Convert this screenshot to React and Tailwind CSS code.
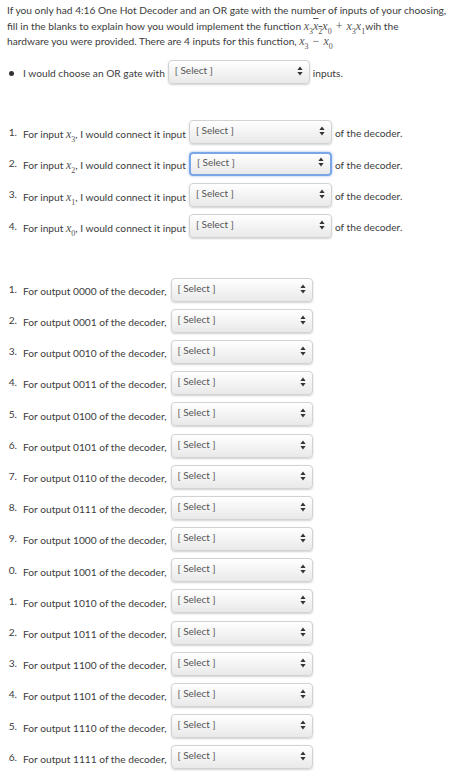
import React from "react";

const font = { fontFamily: "Lato, 'Open Sans', sans-serif" };

// little math helpers, KaTeX-ish look
function X({ sub, bar }) {
  return (
    <span className="italic font-['Liberation_Serif',serif] text-[12px] text-[#555]">
      <span className={bar ? "overline decoration-[#555]" : ""}>
        x<sub className="not-italic text-[8px] align-[-2px]">{sub}</sub>
      </span>
    </span>
  );
}

function Arrows() {
  return (
    <svg width="6" height="10" viewBox="0 0 6 10" className="shrink-0">
      <path d="M3 0.5 L5.6 4 L0.4 4 Z" fill="#333" />
      <path d="M3 9.5 L5.6 6 L0.4 6 Z" fill="#333" />
    </svg>
  );
}

function Select({ focused, width = "w-[143px]" }) {
  return (
    <div
      className={
        "relative h-[24px] shrink-0 rounded-[4px] bg-gradient-to-b from-white to-[#e9e9e9] flex items-start justify-between pl-[6px] pr-[6px] " +
        width +
        (focused
          ? " border-2 border-[#7aa5e6] shadow-[0_0_3px_#9dbbe8]"
          : " border border-[#d2d2d2] shadow-[0_1px_2px_rgba(0,0,0,0.18)]")
      }
    >
      <span className={"text-[10px] text-[#555] leading-none " + (focused ? "pt-[3px]" : "pt-[4px]")}>[ Select ]</span>
      <span className={"self-center " + (focused ? "-mt-[3px]" : "-mt-[2px]")}>
        <Arrows />
      </span>
    </div>
  );
}

// numbers past 9 lose their first digit at the left edge, as in the screenshot
function Num({ n }) {
  return (
    <span className="w-[9px] ml-[8px] mr-[6px] flex justify-end overflow-hidden shrink-0 whitespace-nowrap">
      {n}.
    </span>
  );
}

const outputs = [
  "0000", "0001", "0010", "0011", "0100", "0101", "0110", "0111",
  "1000", "1001", "1010", "1011", "1100", "1101", "1110", "1111",
];

const inputs = [3, 2, 1, 0];

export default function App() {
  return (
    <div style={font} className="w-[474px] min-h-[777px] bg-white text-[#3c3c3c] text-[10.2px] overflow-hidden">
      {/* Question text */}
      <p className="pl-[7px] pr-[4px] pt-[3px] leading-[15.6px] whitespace-nowrap">
        If you only had 4:16 One Hot Decoder and an OR gate with the number of inputs of your choosing,
        <br />
        fill in the blanks to explain how you would implement the function{" "}
        <X sub="3" />
        <X sub="2" bar />
        <X sub="0" />
        <span className="text-[12px] text-[#555] font-['Liberation_Serif',serif] mx-[4px]">+</span>
        <X sub="3" />
        <X sub="1" />
        wih the
        <br />
        hardware you were provided. There are 4 inputs for this function, <X sub="3" />
        <span className="text-[12px] text-[#555] font-['Liberation_Serif',serif] mx-[4px]">−</span>
        <X sub="0" />
      </p>

      {/* OR gate bullet */}
      <div className="flex items-center mt-[10px] h-[24px]">
        <span className="w-[5px] h-[5px] rounded-full bg-[#333] ml-[9px] mr-[9px] mt-[3px] shrink-0" />
        <span className="mt-[4px] mr-[3px]">I would choose an OR gate with</span>
        <Select width="w-[142px]" />
        <span className="mt-[4px] ml-[3px]">inputs.</span>
      </div>

      {/* Inputs */}
      <div className="mt-[33px] flex flex-col">
        {inputs.map((i, idx) => (
          <div key={i} className="flex items-center h-[31.3px]">
            <Num n={idx + 1} />
            <span className="mt-[3px] mr-[3px] whitespace-nowrap">
              For input <X sub={String(i)} />, I would connect it input
            </span>
            <Select focused={idx === 1} />
            <span className="mt-[3px] ml-[3px] whitespace-nowrap">of the decoder.</span>
          </div>
        ))}
      </div>

      {/* Outputs */}
      <div className="mt-[32px] flex flex-col">
        {outputs.map((o, idx) => (
          <div key={o} className="flex items-center h-[31.2px]">
            <Num n={idx + 1} />
            <span className="mt-[4px] mr-[4px] whitespace-nowrap">For output {o} of the decoder,</span>
            <Select width="w-[142px]" />
          </div>
        ))}
      </div>
    </div>
  );
}
